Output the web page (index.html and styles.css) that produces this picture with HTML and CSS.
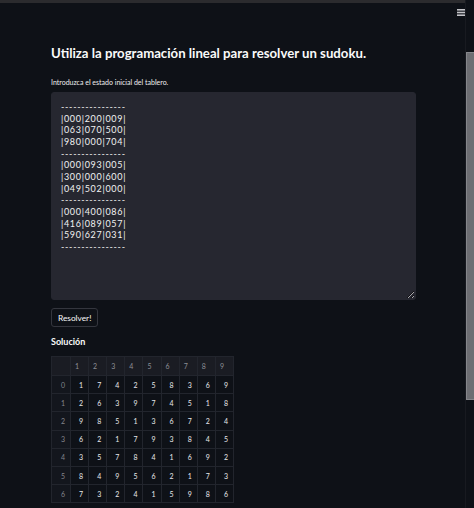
FILE: index.html
```html
<!DOCTYPE html>
<html lang="es">
<head>
<meta charset="utf-8">
<title>Sudoku</title>
<link rel="stylesheet" href="styles.css">
</head>
<body>
<div class="decoration"></div>
<header class="app-header">
  <button class="menu" aria-label="Menú">
    <svg width="9" height="7" viewBox="0 0 9 7"><rect x="0" y="0" width="9" height="1.6" fill="#c4c4c8"/><rect x="0" y="2.7" width="9" height="1.6" fill="#c4c4c8"/><rect x="0" y="5.4" width="9" height="1.6" fill="#c4c4c8"/></svg>
  </button>
</header>
<main class="main">
  <h3 class="title">Utiliza la programación lineal para resolver un sudoku.</h3>
  <label class="label" for="board">Introduzca el estado inicial del tablero.</label>
  <textarea id="board" class="board" spellcheck="false">----------------
|000|200|009|
|063|070|500|
|980|000|704|
----------------
|000|093|005|
|300|000|600|
|049|502|000|
----------------
|000|400|086|
|416|089|057|
|590|627|031|
----------------</textarea>
  <button class="solve">Resolver!</button>
  <div class="subtitle">Solución</div>
  <table class="grid">
    <thead>
      <tr><th class="corner"></th><th>1</th><th>2</th><th>3</th><th>4</th><th>5</th><th>6</th><th>7</th><th>8</th><th>9</th></tr>
    </thead>
    <tbody>
      <tr><th>0</th><td>1</td><td>7</td><td>4</td><td>2</td><td>5</td><td>8</td><td>3</td><td>6</td><td>9</td></tr>
      <tr><th>1</th><td>2</td><td>6</td><td>3</td><td>9</td><td>7</td><td>4</td><td>5</td><td>1</td><td>8</td></tr>
      <tr><th>2</th><td>9</td><td>8</td><td>5</td><td>1</td><td>3</td><td>6</td><td>7</td><td>2</td><td>4</td></tr>
      <tr><th>3</th><td>6</td><td>2</td><td>1</td><td>7</td><td>9</td><td>3</td><td>8</td><td>4</td><td>5</td></tr>
      <tr><th>4</th><td>3</td><td>5</td><td>7</td><td>8</td><td>4</td><td>1</td><td>6</td><td>9</td><td>2</td></tr>
      <tr><th>5</th><td>8</td><td>4</td><td>9</td><td>5</td><td>6</td><td>2</td><td>1</td><td>7</td><td>3</td></tr>
      <tr><th>6</th><td>7</td><td>3</td><td>2</td><td>4</td><td>1</td><td>5</td><td>9</td><td>8</td><td>6</td></tr>
    </tbody>
  </table>
</main>
<div class="scrollbar"><div class="thumb"></div></div>
</body>
</html>
```
FILE: styles.css
```css
html, body {
  margin: 0;
  padding: 0;
  height: 508px;
  overflow: hidden;
}
body {
  background: #0e1117;
  color: #fafafa;
  font-family: "Lato", "Noto Sans", sans-serif;
  position: relative;
}
.decoration {
  height: 3px;
  background: #2b2b2e;
}
.app-header {
  position: absolute;
  top: 3px;
  left: 0;
  right: 0;
  height: 24px;
}
.menu {
  position: absolute;
  top: 6px;
  right: 8px;
  padding: 0;
  border: 0;
  background: none;
  line-height: 0;
}
.main {
  display: flex;
  flex-direction: column;
  align-items: flex-start;
  padding: 39px 0 0 51px;
  width: 365px;
}
.title {
  margin: 0;
  font-size: 13.2px;
  line-height: 22px;
  font-weight: 700;
  color: #fafafa;
}
.label {
  margin-top: 13px;
  font-size: 7px;
  line-height: 10px;
  color: #f0f0f0;
}
.board {
  margin-top: 5px;
  box-sizing: border-box;
  width: 365px;
  height: 208px;
  padding: 8px 9px;
  border: 1px solid #262730;
  border-radius: 3px;
  background: #262730;
  color: #f2f2f2;
  font-family: "Lato", "Noto Sans", sans-serif;
  font-size: 9px;
  line-height: 11.65px;
  letter-spacing: 0.7px;
  resize: vertical;
  outline: none;
  overflow: hidden;
}
.solve {
  margin-top: 8px;
  height: 19px;
  padding: 0 6px;
  border: 1px solid #34363e;
  border-radius: 3px;
  background: #0e1117;
  color: #fafafa;
  font-family: "Lato", "Noto Sans", sans-serif;
  font-size: 8.3px;
}
.subtitle {
  margin-top: 9px;
  font-size: 9px;
  line-height: 12px;
  font-weight: 700;
}
.grid {
  margin-top: 8px;
  border-collapse: collapse;
  table-layout: fixed;
  width: 183px;
  font-size: 7px;
}
.grid th, .grid td {
  border: 1px solid #22252d;
  padding: 0 4px;
  height: 18.2px;
  box-sizing: border-box;
  font-weight: 400;
}
.grid thead th {
  background: #1a1c23;
  color: #8d8f96;
  text-align: left;
  height: 19px;
}
.grid thead th.corner {
  width: 19px;
}
.grid tbody th {
  background: #13161d;
  color: #83858c;
  text-align: right;
  padding-right: 5px;
}
.grid td {
  text-align: right;
  color: #e8e8ea;
  padding-right: 5px;
}
.scrollbar {
  position: absolute;
  top: 0;
  right: 0;
  width: 8px;
  height: 508px;
  background: #0e1117;
  border-left: 1px solid #181a20;
}
.thumb {
  position: absolute;
  top: 52px;
  left: 0;
  width: 8px;
  height: 348px;
  box-sizing: border-box;
  background: #6d6e73;
  border: 1px solid #85868b;
  border-right: 0;
}
```
